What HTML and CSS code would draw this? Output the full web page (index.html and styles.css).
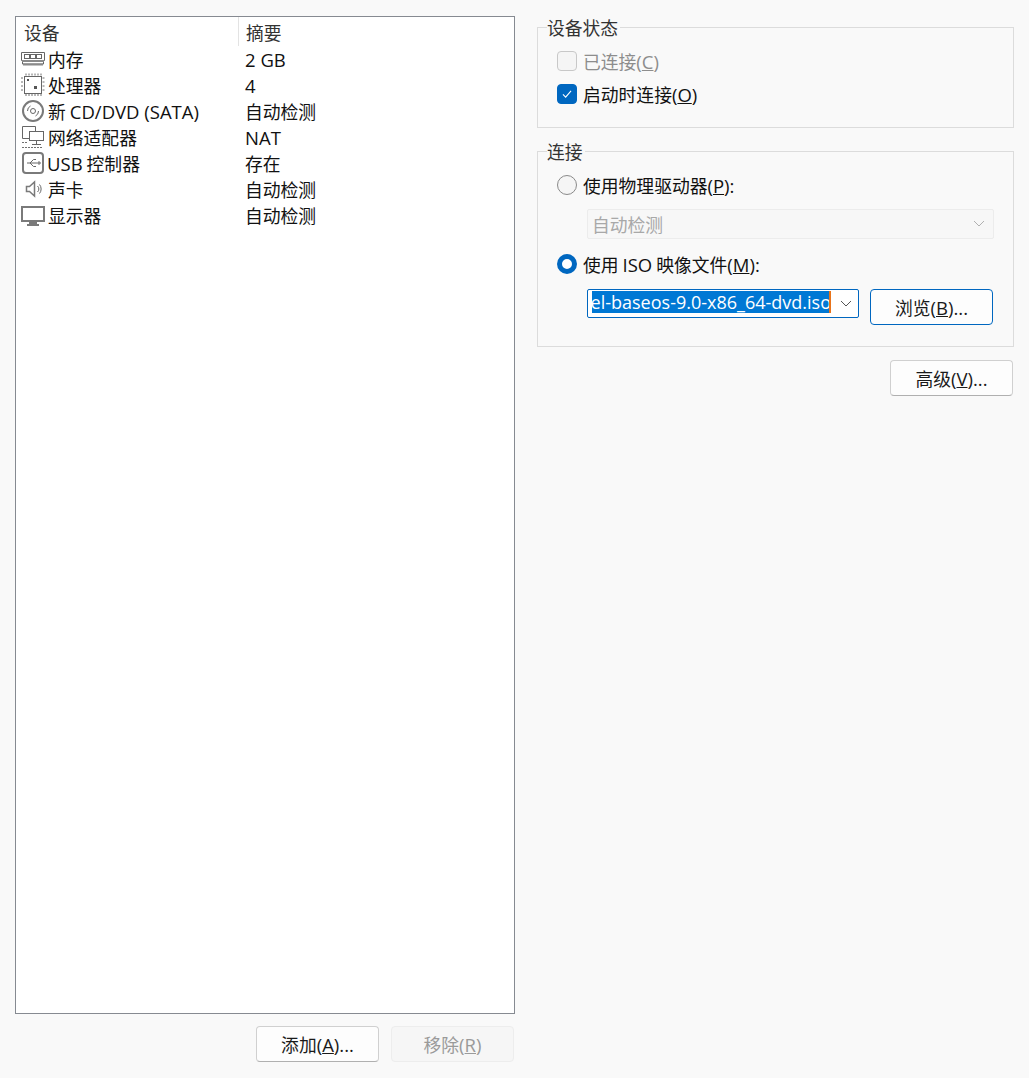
FILE: index.html
```html
<!DOCTYPE html>
<html lang="zh-CN">
<head>
<meta charset="utf-8">
<title>虚拟机设置</title>
<link rel="stylesheet" href="styles.css">
</head>
<body>
<main class="page">
  <section class="left">
    <div class="list">
      <div class="row head"><div class="c1 h1">设备</div><div class="c2 h2">摘要</div></div>
      <div class="row">
        <div class="c1"><svg class="ico" viewBox="0 0 26 26"><path class="s" d="M1.500 6.500h23v8h-1v3.500h-21v-3.500h-1z"/><path class="t" d="M2 15h22M3 18.500h20"/><rect class="s" x="4.500" y="8.500" width="5" height="4"/><rect class="s" x="10.500" y="8.500" width="5" height="4"/><rect class="s" x="16.500" y="8.500" width="5" height="4"/></svg><span>内存</span></div>
        <div class="c2"><span class="lat">2 GB</span></div>
      </div>
      <div class="row">
        <div class="c1"><svg class="ico" viewBox="0 0 26 26"><rect class="s" x="4.500" y="4.500" width="17" height="17"/><path class="d" d="M6 1.500v2.500M9 1.500v2.500M12 1.500v2.500M15 1.500v2.500M18 1.500v2.500M21 1.500v2.500M6 22v2.500M9 22v2.500M12 22v2.500M15 22v2.500M18 22v2.500M21 22v2.500M1 6h2.500M1 10h2.500M1 14h2.500M1 18h2.500M22.500 6h2.500M22.500 10h2.500M22.500 14h2.500M22.500 18h2.500"/><rect class="f" x="7" y="7" width="2" height="2"/><rect class="f" x="14" y="14" width="3" height="3"/></svg><span>处理器</span></div>
        <div class="c2"><span class="lat">4</span></div>
      </div>
      <div class="row">
        <div class="c1"><svg class="ico" viewBox="0 0 26 26"><circle class="s2" cx="13" cy="13" r="10"/><circle class="s" cx="13" cy="13" r="2.500"/><path class="s" d="M7.500 13a5.500 5.500 0 0 1 3-5M18.500 13a5.500 5.500 0 0 1-3 5"/></svg><span><span class="cjk">新</span> <span class="lat">CD/DVD (SATA)</span></span></div>
        <div class="c2">自动检测</div>
      </div>
      <div class="row">
        <div class="c1"><svg class="ico" viewBox="0 0 26 26"><path class="s" d="M9.500 14.500h-7v-12h13v5"/><rect class="s" x="9.500" y="7.500" width="14" height="9"/><path class="s" d="M16.500 16.500v3.500M12 20.500h9"/><path class="d" d="M2 18.500h6M2 23.500h20"/></svg><span>网络适配器</span></div>
        <div class="c2"><span class="lat">NAT</span></div>
      </div>
      <div class="row">
        <div class="c1"><svg class="ico" viewBox="0 0 26 26"><rect class="s2" x="3" y="3" width="20" height="20" rx="3"/><path class="s" d="M7 13h12M10 13l3.500-3.500h2.500M10 13l3.500 3.500h2.500"/><path class="s" d="M19 11.500v3l1.500-1.500z"/></svg><span class="usb"><span class="lat">USB</span> 控制器</span></div>
        <div class="c2">存在</div>
      </div>
      <div class="row">
        <div class="c1"><svg class="ico" viewBox="0 0 26 26"><path class="s2b" d="M6.500 10.500h3l5-4.500v14l-5-4.500h-3z"/><path class="s" d="M17.500 10a4 4 0 0 1 0 6M19.500 8.500a7 7 0 0 1 0 9"/></svg><span>声卡</span></div>
        <div class="c2">自动检测</div>
      </div>
      <div class="row">
        <div class="c1"><svg class="ico" viewBox="0 0 26 26"><rect class="s2" x="2" y="5" width="22" height="14"/><path class="b" d="M9 21h8"/><path class="b" d="M7 23h12"/></svg><span>显示器</span></div>
        <div class="c2">自动检测</div>
      </div>
    </div>
    <div class="actions left-actions">
      <button class="btn" type="button">添加<span class="lat">(<u>A</u>)...</span></button>
      <button class="btn off" type="button">移除<span class="lat">(<u>R</u>)</span></button>
    </div>
  </section>
  <section class="right">
    <fieldset class="group g1">
      <legend>设备状态</legend>
      <div class="opt muted"><span class="check"></span><span>已连接<span class="lat">(<u>C</u>)</span></span></div>
      <div class="opt gap-c"><span class="check on"><svg viewBox="0 0 20 20"><path d="M5.500 10.500l3 3 6-7"/></svg></span><span>启动时连接<span class="lat">(<u>O</u>)</span></span></div>
    </fieldset>
    <fieldset class="group g2">
      <legend>连接</legend>
      <div class="opt"><span class="radio"></span><span>使用物理驱动器<span class="lat">(<u>P</u>):</span></span></div>
      <div class="select"><span>自动检测</span><svg class="chev" viewBox="0 0 12 8"><path d="M1 1l5 5 5-5"/></svg></div>
      <div class="opt gap-r"><span class="radio on"></span><span>使用 <span class="lat">ISO</span> 映像文件<span class="lat">(<u>M</u>):</span></span></div>
      <div class="combo-row">
        <div class="combo">
          <div class="clip"><span class="sel">rhel-baseos-9.0-x86_64-dvd.iso</span></div>
          <svg class="chev dark" viewBox="0 0 12 8"><path d="M1 1l5 5 5-5"/></svg>
        </div>
        <button class="btn focus" type="button">浏览<span class="lat">(<u>B</u>)...</span></button>
      </div>
    </fieldset>
    <div class="actions adv">
      <button class="btn" type="button">高级<span class="lat">(<u>V</u>)...</span></button>
    </div>
  </section>
</main>
</body>
</html>
```
FILE: styles.css
```css
* { box-sizing: border-box; }
html, body { margin: 0; height: 100%; }
body {
  background: #f9f9f9;
  color: #111;
  font-family: "Noto Sans CJK SC", sans-serif;
  font-size: 17.8px;
  line-height: 24px;
}
.lat {
  font-family: "Open Sans", "Noto Sans", sans-serif;
  font-size: 18.5px;
  color: inherit;
}
.page {
  display: flex;
  gap: 22px;
  padding: 16px 15px 0;
  width: 1029px;
  height: 1078px;
}
.left { width: 500px; display: flex; flex-direction: column; }
.right { width: 477px; }
.list {
  height: 998px;
  background: #fff;
  border: 1px solid #868a91;
}
.row { display: flex; height: 26px; align-items: center; }
.row.head { height: 29px; }
.c1 { width: 222px; display: flex; align-items: center; padding-left: 4px; flex: none; }
.c2 { padding-left: 7px; }
.h1 { height: 29px; padding-left: 8px; color: #333; }
.h2 { height: 29px; border-left: 1px solid #e3e3e3; padding-left: 7px; display: flex; align-items: center; width: 275px; color: #333; }
.c1 > span { margin-left: 2px; white-space: nowrap; }
.c1 > .usb { margin-left: 1px; }
.ico { width: 26px; height: 26px; flex: none; }
.ico path, .ico rect, .ico circle { fill: none; }
.ico .s { stroke: #666; stroke-width: 1; }
.ico .s2 { stroke: #7a7a7a; stroke-width: 2; }
.ico .s2b { stroke: #7a7a7a; stroke-width: 1.500; }
.ico .t { stroke: #8a8a8a; stroke-width: 2; }
.ico .d { stroke: #707070; stroke-width: 1; stroke-dasharray: 2 1; }
.ico .f { fill: #555; }
.ico .b { stroke: #7a7a7a; stroke-width: 2; }
.actions { display: flex; justify-content: flex-end; gap: 12px; }
.left-actions { margin-top: 12px; padding-right: 1px; }
.btn {
  width: 123px;
  height: 36px;
  padding: 0;
  background: #fdfdfd;
  border: 1px solid #d0d0d0;
  border-bottom-color: #b0b0b0;
  border-radius: 4px;
  color: #1a1a1a;
  font: inherit;
}
.btn.off { background: #f6f6f6; border-color: #ededed; color: #9a9a9a; }
.btn.focus { border: 1px solid #0067c0; background: #fdfdfd; }
.group {
  margin: 0;
  padding: 0 0 0 19px;
  border: 1px solid #dcdcdc;
  min-width: 0;
}
.group legend { padding: 0 2px 0 0; margin-left: -10px; color: #333; line-height: 22px; }
.g1 { height: 112px; }
.g2 { height: 207px; margin-top: 12px; }
.opt { display: flex; align-items: center; gap: 6px; height: 24px; color: #111; }
.g1 .opt:first-of-type { margin-top: 11px; }
.g2 .opt:first-of-type { margin-top: 11px; }
.gap-c { margin-top: 9px; }
.gap-r { margin-top: 13px; }
.muted { color: #8d8d8d; }
.check {
  width: 20px; height: 20px;
  border: 1px solid #c8c8c8;
  border-radius: 4px;
  background: #f5f5f5;
  flex: none;
}
.check.on { background: #0067c0; border-color: #0067c0; }
.check svg { display: block; width: 18px; height: 18px; }
.check path { fill: none; stroke: #fff; stroke-width: 1.200; }
.radio {
  width: 20px; height: 20px;
  border: 1px solid #8a8a8a;
  border-radius: 50%;
  background: #f5f5f5;
  flex: none;
}
.radio.on { background: #fff; border: 5.500px solid #0067c0; }
.select {
  width: 407px; height: 30px;
  margin: 12px 0 0 30px;
  padding: 0 8px 0 4px;
  display: flex; align-items: center; justify-content: space-between;
  background: #f7f7f7;
  border: 1px solid #ececec;
  border-radius: 2px;
  color: #a8a8a8;
}
.chev { width: 12px; height: 8px; flex: none; }
.chev path { fill: none; stroke: #b0b0b0; stroke-width: 1; }
.chev.dark path { stroke: #555; }
.combo-row { display: flex; gap: 11px; margin: 13px 0 0 30px; align-items: flex-start; }
.combo {
  width: 272px; height: 29px;
  background: #fff;
  border: 1px solid #0067c0;
  border-radius: 2px;
  display: flex; align-items: center;
  padding-left: 4px;
  gap: 9px;
}
.clip {
  width: 239px; height: 22px;
  align-self: flex-start;
  margin-top: 1px;
  overflow: hidden;
  display: flex; justify-content: flex-end;
  border-right: 2px solid #e8731a;
  flex: none;
}
.sel {
  background: #0078d4; color: #fff;
  white-space: nowrap;
  line-height: 22px;
  font-family: "Open Sans", "Noto Sans", sans-serif;
  font-size: 18px;
  flex: none;
  margin-right: -2px;
}
.adv { margin-top: 13px; padding-right: 1px; }
```
